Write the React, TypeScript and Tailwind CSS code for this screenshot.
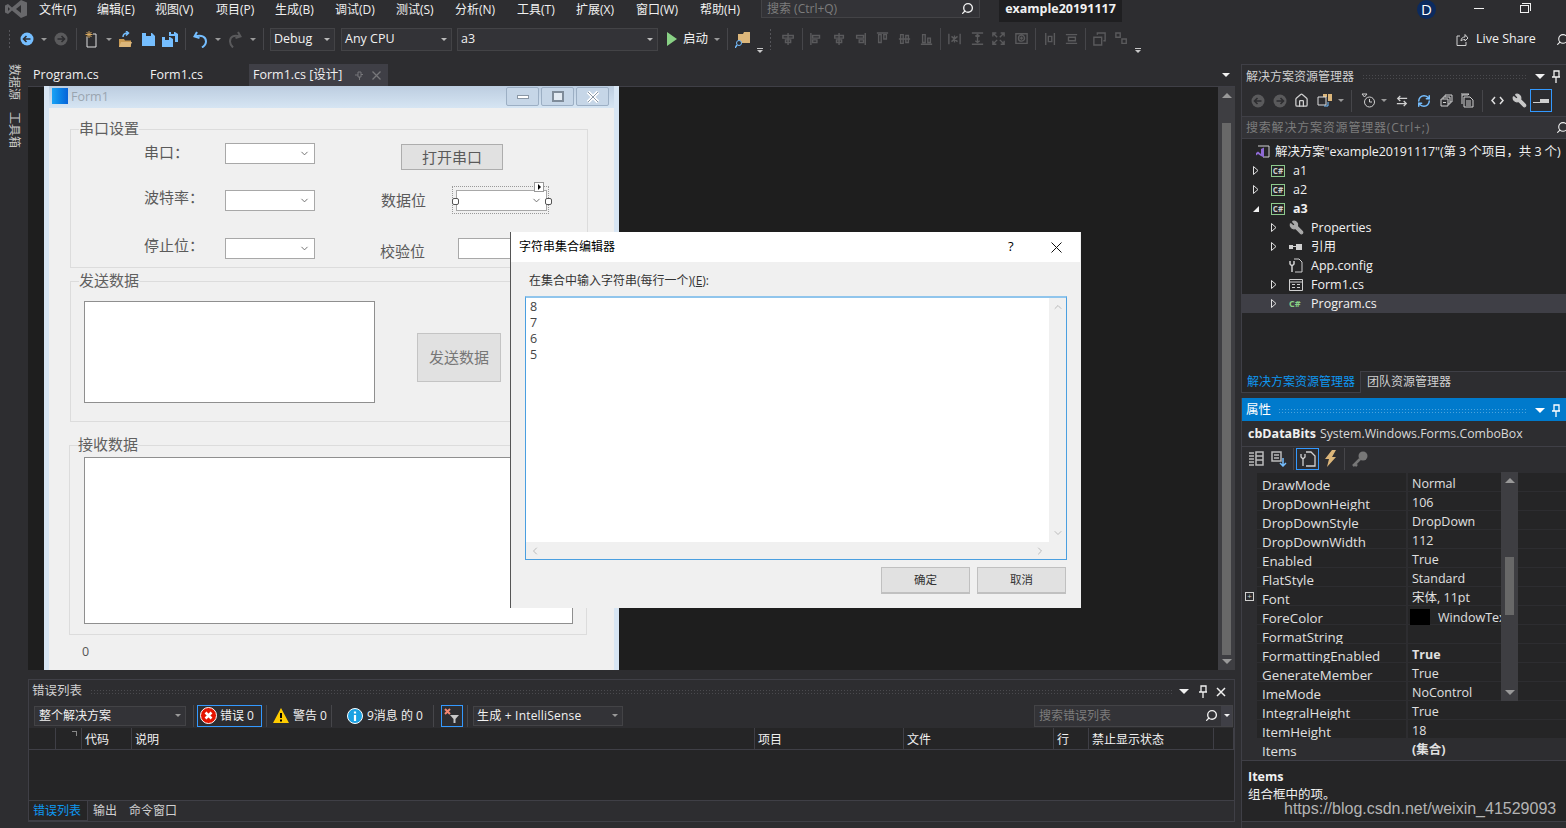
import type { ReactNode } from "react";
import { ChevronDown, ChevronUp, ChevronLeft, ChevronRight, Search, Wrench, Home, RefreshCw } from "lucide-react";

const font = "font-['Open_Sans','Noto_Sans_CJK_SC',sans-serif]";

const menus = [
  ["文件(F)", "w-[58px]"],
  ["编辑(E)", "w-[58px]"],
  ["视图(V)", "w-[61px]"],
  ["项目(P)", "w-[59px]"],
  ["生成(B)", "w-[60px]"],
  ["调试(D)", "w-[61px]"],
  ["测试(S)", "w-[59px]"],
  ["分析(N)", "w-[62px]"],
  ["工具(T)", "w-[59px]"],
  ["扩展(X)", "w-[60px]"],
  ["窗口(W)", "w-[64px]"],
  ["帮助(H)", "w-[61px]"],
];

const props: [string, ReactNode][] = [
  ["DrawMode", "Normal"],
  ["DropDownHeight", "106"],
  ["DropDownStyle", "DropDown"],
  ["DropDownWidth", "112"],
  ["Enabled", "True"],
  ["FlatStyle", "Standard"],
  ["Font", "宋体, 11pt"],
  ["ForeColor", <span className="flex items-center" key="fc"><span className="w-[20px] h-[16px] bg-black -ml-[2px] mr-[8px]" />WindowTex</span>],
  ["FormatString", ""],
  ["FormattingEnabled", <b key="fe">True</b>],
  ["GenerateMember", "True"],
  ["ImeMode", "NoControl"],
  ["IntegralHeight", "True"],
  ["ItemHeight", "18"],
  ["Items", <b key="it">(集合)</b>],
];

// disabled layout toolbar glyphs
const layoutIcons: [string, string][] = [
  ["ml-[10px]", "M7 1v14M1 4h12v3H1zM4 9h6v3H4z"],
  ["sep", ""],
  ["ml-[7px]", "M1 1v14M3 4h8v3H3zM3 9h5v3H3z"],
  ["ml-[10px]", "M7 1v14M2 4h10v3H2zM4 9h6v3H4z"],
  ["ml-[8px]", "M13 1v14M3 4h8v3H3zM6 9h5v3H6z"],
  ["ml-[9px]", "M1 1h13M3 3h3v9H3zM9 3h3v5H9z"],
  ["ml-[9px]", "M1 8h13M3 3h3v10H3zM9 4h3v8H9z"],
  ["ml-[9px]", "M1 14h13M3 3h3v9H3zM9 7h3v5H9z"],
  ["sep", ""],
  ["ml-[7px]", "M1 2v12M14 2v12M4 5l7 6M11 5l-7 6M7.5 4v8"],
  ["ml-[10px]", "M1 1h13M1 14h13M7.5 3v9M5 5l2.500-2 2.500 2M5 10l2.500 2 2.500-2"],
  ["ml-[8px]", "M1 5V1h4M10 1h4v4M14 10v4h-4M5 14H1v-4M2 2l4 4M13 2L9 6M13 13L9 9M2 13l4-4"],
  ["ml-[10px]", "M1 2h13v11H1zM4 7a3.500 3.500 0 1 0 7 0a3.500 3.500 0 1 0-7 0M7.500 5v4M5.500 7h4"],
  ["sep", ""],
  ["ml-[8px]", "M2 1v14M12 1v14M5 5h4v6H5z"],
  ["ml-[8px]", "M1 3h13M1 13h13M4 6h8v4H4z"],
  ["sep", ""],
  ["ml-[7px]", "M1 6h9v9H1zM5 3V1h9v9h-2"],
  ["ml-[9px]", "M1 1h5v5H1zM8 8h5v5H8z"],
];

function Sep({ className = "" }: { className?: string }) {
  return <span className={`w-px h-[22px] bg-[#46464a] ${className}`} />;
}

function Caret({ className = "" }: { className?: string }) {
  return <span className={`w-0 h-0 border-x-[3px] border-x-transparent border-t-[3px] border-t-[#999] ${className}`} />;
}

function WhiteCaret({ className = "" }: { className?: string }) {
  return <span className={`w-0 h-0 border-x-[5px] border-x-transparent border-t-[5px] border-t-[#f1f1f1] ${className}`} />;
}

function Overflow({ className = "" }: { className?: string }) {
  return (
    <span className={`flex flex-col items-center self-end mb-[3px] ${className}`}>
      <span className="w-[6px] h-px bg-[#c8c8c8] mb-px" />
      <span className="w-0 h-0 border-x-[3px] border-x-transparent border-t-[3px] border-t-[#c8c8c8]" />
    </span>
  );
}

function Grip({ className = "" }: { className?: string }) {
  return <span className={`h-[6px] bg-[radial-gradient(#4a4a4e_1px,transparent_1px)] bg-[length:3px_3px] ${className}`} />;
}

function Combo({ label, className }: { label: string; className: string }) {
  return (
    <div className={`h-[23px] bg-[#333337] border border-[#434346] flex items-center justify-between pl-[3px] pr-[4px] text-[12.5px] text-[#f1f1f1] ${className}`}>
      <span>{label}</span>
      <Caret className="border-t-[#bbb]" />
    </div>
  );
}

function CircleArrow({ dir, color, fg }: { dir: "l" | "r"; color: string; fg: string }) {
  return (
    <svg width="14" height="14" viewBox="0 0 14 14">
      <circle cx="7" cy="7" r="6.500" fill={color} />
      <path d={dir === "l" ? "M10.500 7H4M6.500 4L3.500 7l3 3" : "M3.500 7H10M7.500 4l3 3-3 3"} stroke={fg} strokeWidth="1.600" fill="none" />
    </svg>
  );
}

function MainToolbar() {
  return (
    <div className="h-[34px] flex items-center text-[#f1f1f1]">
      <span className="ml-[8px] w-[3px] h-[20px] bg-[radial-gradient(#55555a_1px,transparent_1px)] bg-[length:3px_4px]" />
      <span className="ml-[9px]"><CircleArrow dir="l" color="#75beff" fg="#2d2d30" /></span>
      <Caret className="ml-[7px]" />
      <span className="ml-[7px]"><CircleArrow dir="r" color="#5a5a5c" fg="#2d2d30" /></span>
      <Sep className="ml-[8px]" />
      <svg className="ml-[7px]" width="15" height="17" viewBox="0 0 15 17" fill="none">
        <path d="M3 6v10h9V6M9 3h3v3" stroke="#e0e0e0" />
        <path d="M5 0v7M1.500 3.500h7M2.500 1l5 5M7.500 1l-5 5" stroke="#d8a95f" />
      </svg>
      <Caret className="ml-[7px]" />
      <svg className="ml-[6px]" width="15" height="17" viewBox="0 0 15 17">
        <path d="M1 8h5l1 1.500h6V16H1z" fill="#c99a52" />
        <path d="M1 16l2-5h11l-2 5z" fill="#dcb67a" />
        <path d="M5 6c0-3 2-4 5-4M8 0l2.500 2L8 4.500" stroke="#75beff" strokeWidth="1.500" fill="none" />
      </svg>
      <svg className="ml-[9px]" width="13" height="13" viewBox="0 0 13 13">
        <path d="M0 0h10l3 3v10H0z" fill="#75beff" />
        <path d="M4 0h5v3H4z" fill="#2d2d30" />
      </svg>
      <svg className="ml-[7px]" width="16" height="15" viewBox="0 0 16 15">
        <path d="M7 0h6l3 2v8h-3V4H7z" fill="#75beff" />
        <path d="M0 5h8l3 2v8H0z" fill="#75beff" />
        <path d="M3 5h4v3H3zM9 0h3v2H9z" fill="#2d2d30" />
      </svg>
      <Sep className="ml-[7px]" />
      <svg className="ml-[7px]" width="15" height="17" viewBox="0 0 15 17" fill="none">
        <path d="M4 1L1.500 5.500 6.500 7M2 5.500c6-2 11 0 11 5 0 2-1 4-4 6" stroke="#75beff" strokeWidth="2" />
      </svg>
      <Caret className="ml-[7px]" />
      <svg className="ml-[8px]" width="13" height="17" viewBox="0 0 13 17" fill="none">
        <path d="M9 1l2.500 4.500L6.500 7M11 5.500c-6-2-10 0-10 5 0 2 1 4 3 6" stroke="#5a5a5c" strokeWidth="2" />
      </svg>
      <Caret className="ml-[8px] border-t-[#666]" />
      <Sep className="ml-[7px]" />
      <Combo label="Debug" className="ml-[6px] w-[65px]" />
      <Combo label="Any CPU" className="ml-[6px] w-[111px]" />
      <Combo label="a3" className="ml-[5px] w-[201px]" />
      <span className="ml-[9px] w-0 h-0 border-y-[7px] border-y-transparent border-l-[10px] border-l-[#89d185]" />
      <span className="ml-[6px] text-[12.5px]">启动</span>
      <Caret className="ml-[6px]" />
      <Sep className="ml-[7px]" />
      <svg className="ml-[7px]" width="16" height="17" viewBox="0 0 16 17">
        <path d="M3 3h5l1-2h6v11H3z" fill="#dcb67a" />
        <circle cx="4" cy="12" r="2.500" fill="#2d2d30" stroke="#75beff" />
        <path d="M2 14l-2 3" stroke="#75beff" strokeWidth="1.500" />
      </svg>
      <Overflow className="ml-[6px]" />
      <span className="ml-[6px] w-[3px] h-[22px] bg-[radial-gradient(#55555a_1px,transparent_1px)] bg-[length:3px_4px]" />
      {layoutIcons.map(([cls, d], i) =>
        cls === "sep" ? (
          <Sep key={i} className="ml-[7px]" />
        ) : (
          <svg key={i} className={cls} width="13" height="14" viewBox="0 0 15 16" fill="none" stroke="#5a5a5c" strokeWidth="1.600">
            <path d={d} />
          </svg>
        )
      )}
      <Overflow className="ml-[7px]" />
      <div className="flex-1" />
      <svg width="12" height="13" viewBox="0 0 12 13" fill="none" stroke="#d0d0d0">
        <path d="M1 3v9.500h9V9M1 3h3M5 8c0-3 2-4 4-4V1.500L12 5 9 8V6.500C7 6.500 6 7 5 8z" />
      </svg>
      <span className="ml-[8px] w-[80px] text-[12.5px]">Live Share</span>
      <Search size={13} className="text-[#f1f1f1] -scale-x-100 -mr-[3px]" />
    </div>
  );
}

function Combobox({ className }: { className: string }) {
  return (
    <div className={`absolute h-[21px] bg-white border border-[#a8a8a8] flex items-center justify-end pr-[4px] ${className}`}>
      <ChevronDown size={11} className="text-[#666]" />
    </div>
  );
}

function Legend({ text, className }: { text: string; className: string }) {
  return <span className={`absolute bg-[#f0f0f0] text-[15px] leading-[20px] text-[#606060] ${className}`}>{text}</span>;
}

function Label({ text, className }: { text: string; className: string }) {
  return <span className={`absolute text-[15px] leading-[20px] text-[#5a5a5a] ${className}`}>{text}</span>;
}

function FormDesigner() {
  return (
    <div className="ml-[16px] -mt-px w-[575px] h-[584px] relative bg-[#f0f0f0] border-x-[5px] border-x-[#d8e6f4] overflow-hidden">
      <div className="absolute -left-[5px] top-0 w-[575px] h-[22px] bg-gradient-to-b from-[#bccde0] to-[#d6e5f3]">
        <span className="absolute left-[8px] top-[2px] w-[16px] h-[16px] bg-gradient-to-r from-[#1aa3f5] to-[#0a63d8]" />
        <span className="absolute left-[27px] top-[2px] text-[12.5px] text-[#9aa5b0]">Form1</span>
        <div className="absolute left-[462px] top-[1px] flex gap-[2px]">
          {[
            <span key="a" className="w-[12px] h-[4px] bg-white border border-[#8a97a5]" />,
            <span key="b" className="w-[12px] h-[11px] bg-white/50 border-2 border-[#7f8c9a]" />,
            <svg key="c" width="14" height="12" viewBox="0 0 14 12"><path d="M2 1l10 10M12 1L2 11" stroke="#fff" strokeWidth="3.500" /><path d="M2 1l10 10M12 1L2 11" stroke="#8a97a5" strokeWidth="1" /></svg>,
          ].map((el, i) => (
            <span key={i} className="w-[33px] h-[19px] flex items-center justify-center rounded-[2px] border border-[#9cafc4] bg-[#c6d6e7]">{el}</span>
          ))}
        </div>
      </div>

      <div className="absolute left-[21px] top-[43px] w-[518px] h-[139px] border border-[#dcdcdc]" />
      <Legend text="串口设置" className="left-[30px] top-[32px]" />
      <Label text="串口：" className="left-[95px] top-[56px]" />
      <Label text="波特率：" className="left-[95px] top-[101px]" />
      <Label text="停止位：" className="left-[95px] top-[149px]" />
      <Combobox className="left-[176px] top-[57px] w-[90px]" />
      <Combobox className="left-[176px] top-[104px] w-[90px]" />
      <Combobox className="left-[176px] top-[152px] w-[90px]" />
      <div className="absolute left-[352px] top-[58px] w-[102px] h-[26px] bg-[#e1e1e1] border border-[#adadad] flex items-center justify-center text-[15px] text-[#5a5a5a]">打开串口</div>
      <Label text="数据位" className="left-[332px] top-[104px]" />
      <Label text="校验位" className="left-[331px] top-[155px]" />
      <div className="absolute left-[403px] top-[100px] w-[97px] h-[28px] border border-dotted border-[#999]" />
      <Combobox className="left-[407px] top-[104px] w-[91px]" />
      <span className="absolute left-[403px] top-[112px] w-[7px] h-[7px] bg-white border border-[#555] rounded-[2px]" />
      <span className="absolute left-[496px] top-[112px] w-[7px] h-[7px] bg-white border border-[#555] rounded-[2px]" />
      <span className="absolute left-[485px] top-[96px] w-[10px] h-[10px] bg-white border border-[#999] flex items-center justify-center">
        <span className="w-0 h-0 border-y-[3px] border-y-transparent border-l-[3px] border-l-black" />
      </span>
      <Combobox className="left-[409px] top-[152px] w-[90px]" />

      <div className="absolute left-[21px] top-[195px] w-[518px] h-[141px] border border-[#dcdcdc]" />
      <Legend text="发送数据" className="left-[30px] top-[184px]" />
      <div className="absolute left-[35px] top-[215px] w-[291px] h-[102px] bg-white border border-[#8f8f8f]" />
      <div className="absolute left-[368px] top-[247px] w-[84px] h-[49px] bg-[#e1e1e1] border border-[#c4c4c4] flex items-center justify-center text-[15px] text-[#777]">发送数据</div>

      <div className="absolute left-[20px] top-[359px] w-[518px] h-[190px] border border-[#dcdcdc]" />
      <Legend text="接收数据" className="left-[29px] top-[348px]" />
      <div className="absolute left-[35px] top-[371px] w-[489px] h-[167px] bg-white border border-[#8f8f8f]" />
      <span className="absolute left-[33px] top-[557px] text-[12.5px] text-[#555]">0</span>
    </div>
  );
}

function Dialog() {
  return (
    <div className="absolute left-[510px] top-[232px] w-[571px] h-[376px] bg-[#f0f0f0] border-l border-l-[#555] text-[#222] z-10">
      <div className="h-[30px] w-[569px] bg-white flex items-center pl-[8px] text-[12px] text-black">
        <span>字符串集合编辑器</span>
        <span className="ml-[393px] text-[13px]">?</span>
        <svg className="ml-[37px]" width="11" height="11" viewBox="0 0 11 11"><path d="M0.500 0.500l10 10M10.500 0.500l-10 10" stroke="#111" /></svg>
      </div>
      <div className="mt-[10px] ml-[18px] text-[12px] leading-[18px] text-[#333]">在集合中输入字符串(每行一个)(<span className="underline">E</span>):</div>
      <div className="mt-[6px] ml-[14px] w-[542px] h-[264px] border border-[#4a9fe0] border-t-2 border-t-[#90c5ec] bg-[#f0f0f0] flex flex-col">
        <div className="flex-1 flex min-h-0">
          <div className="flex-1 bg-white pl-[4px] pt-px text-[12.500px] leading-[16px] text-[#444]">
            <div>8</div>
            <div>7</div>
            <div>6</div>
            <div>5</div>
          </div>
          <div className="w-[17px] flex flex-col items-center justify-between py-[3px] text-[#bbb]">
            <ChevronUp size={12} />
            <ChevronDown size={12} />
          </div>
        </div>
        <div className="h-[17px] flex items-center justify-between pl-[3px] pr-[20px] text-[#bbb]">
          <ChevronLeft size={12} />
          <ChevronRight size={12} />
        </div>
      </div>
      <div className="mt-[7px] mr-[15px] flex justify-end gap-[7px]">
        {["确定", "取消"].map((t) => (
          <div key={t} className="w-[89px] h-[27px] bg-[#e1e1e1] border border-[#c0c0c0] border-b-2 flex items-center justify-center text-[11.500px] text-[#333]">{t}</div>
        ))}
      </div>
    </div>
  );
}

function Tri({ open }: { open?: boolean }) {
  return open ? (
    <span className="w-0 h-0 border-l-[6px] border-l-transparent border-b-[6px] border-b-[#f1f1f1]" />
  ) : (
    <svg width="6" height="9" viewBox="0 0 6 9"><path d="M0.500 0.500l4.500 4-4.500 4z" fill="none" stroke="#e0e0e0" /></svg>
  );
}

function CsBox() {
  return <span className="w-[14px] h-[12px] border border-[#8dc98d] flex items-center justify-center text-[8px] leading-none font-bold text-[#cfcfcf]">C#</span>;
}

function TreeRow({ indent, arrow, icon, label, selected, bold }: { indent: string; arrow?: "open" | "closed"; icon: ReactNode; label: string; selected?: boolean; bold?: boolean }) {
  return (
    <div className={`h-[19px] flex items-center ${selected ? "bg-[#3f3f46]" : ""}`}>
      <span className={`${indent} w-[18px] flex items-center`}>{arrow && <Tri open={arrow === "open"} />}</span>
      <span className="w-[20px] mr-[2px] flex items-center">{icon}</span>
      <span className={`pt-px text-[12.500px] text-[#f1f1f1] ${bold ? "font-bold" : ""}`}>{label}</span>
    </div>
  );
}

function SolutionExplorer() {
  return (
    <div className="h-[329px] border border-[#3f3f46] border-r-0 border-b-0 flex flex-col shrink-0">
      <div className="h-[22px] flex items-center pl-[4px] pt-px text-[12px] text-[#d0d0d0]">
        <span>解决方案资源管理器</span>
        <Grip className="w-[164px] ml-[8px]" />
        <WhiteCaret className="ml-[9px]" />
        <svg className="ml-[6px]" width="10" height="13" viewBox="0 0 10 13"><path d="M3 1h5v6H3zM1 7h8M5 7v6" stroke="#f1f1f1" strokeWidth="1.300" fill="none" /></svg>
      </div>
      <div className="h-[27px] flex items-center text-[#d0d0d0]">
        <span className="ml-[9px]"><CircleArrow dir="l" color="#5a5a5c" fg="#2d2d30" /></span>
        <span className="ml-[8px]"><CircleArrow dir="r" color="#5a5a5c" fg="#2d2d30" /></span>
        <Home size={15} className="ml-[7px]" />
        <svg className="ml-[8px]" width="15" height="15" viewBox="0 0 15 15">
          <path d="M6 1h4v3H6zM11 1h4v7h-4z" fill="#dcb67a" />
          <path d="M1 4h8v8H1z" fill="none" stroke="#e0e0e0" />
          <path d="M11 9v4H7" stroke="#75beff" fill="none" />
        </svg>
        <Caret className="ml-[6px]" />
        <Sep className="ml-[7px]" />
        <svg className="ml-[9px]" width="15" height="15" viewBox="0 0 15 15" fill="none" stroke="#d0d0d0">
          <circle cx="8.500" cy="9" r="5" /><path d="M8.500 6v3h2.500M1 1h5L3.500 4z" />
        </svg>
        <Caret className="ml-[5px]" />
        <svg className="ml-[9px]" width="12" height="14" viewBox="0 0 14 14" fill="none" stroke="#d0d0d0" strokeWidth="1.500">
          <path d="M13 4H2M5 1L2 4l3 3M1 10h11M9 7l3 3-3 3" />
        </svg>
        <RefreshCw size={14} strokeWidth={2.500} className="ml-[9px] text-[#75beff]" />
        <svg className="ml-[9px]" width="13" height="13" viewBox="0 0 13 13" fill="none" stroke="#d0d0d0">
          <path d="M1 5h7v7H1zM3 5V3h7v7H8M5 3V1h7v7h-2M3 8.500h3" />
        </svg>
        <svg className="ml-[7px]" width="14" height="15" viewBox="0 0 14 15" fill="none" stroke="#d0d0d0">
          <path d="M1 1h8l-1 1H2v9M4 4h6l3 3v7H4zM6 8h5M6 10h5M6 12h5" />
        </svg>
        <Sep className="ml-[8px]" />
        <svg className="ml-[8px]" width="13" height="9" viewBox="0 0 13 9" fill="none" stroke="#e0e0e0" strokeWidth="1.500"><path d="M4 1L1 4.500 4 8M9 1l3 3.500L9 8" /></svg>
        <Wrench size={15} fill="#c8c8c8" className="ml-[8px] text-[#c8c8c8] -scale-x-100" />
        <span className="ml-[3px] w-[22px] h-[23px] border border-[#3399ff] flex flex-col items-end justify-center px-[2px]">
          <span className="w-[9px] h-[3px] bg-[#d0d0d0]" />
          <span className="w-full h-px bg-[#d0d0d0]" />
        </span>
      </div>
      <div className="mt-[2px] h-[23px] bg-[#333337] border-y border-[#3f3f46] flex items-center justify-between pl-[4px] text-[12px] tracking-[0.8px] text-[#7c7c7c]">
        <span>搜索解决方案资源管理器(Ctrl+;)</span>
        <Search size={13} className="text-[#f1f1f1] -scale-x-100 -mr-[3px]" />
      </div>
      <div className="pt-[3px] flex-1 bg-[#252526]">
        <div className="h-[19px] flex items-center pl-[13px]">
          <svg width="15" height="14" viewBox="0 0 15 14" fill="none">
            <path d="M3 1h11v11H8" stroke="#d0d0d0" />
            <path d="M1 8l2-1.500L6 9V4l3-1.500v10L6 11 3 9l-2 1.500z" fill="#8e6ad3" />
          </svg>
          <span className="ml-[5px] pt-px text-[12.500px] text-[#f1f1f1] whitespace-nowrap tracking-[-0.1px]">解决方案"example20191117"(第 3 个项目，共 3 个)</span>
        </div>
        <TreeRow indent="ml-[11px]" arrow="closed" icon={<CsBox />} label="a1" />
        <TreeRow indent="ml-[11px]" arrow="closed" icon={<CsBox />} label="a2" />
        <TreeRow indent="ml-[11px]" arrow="open" icon={<CsBox />} label="a3" bold />
        <TreeRow indent="ml-[29px]" arrow="closed" icon={<Wrench size={15} fill="#aaa" className="text-[#aaa] -scale-x-100" />} label="Properties" />
        <TreeRow indent="ml-[29px]" arrow="closed" icon={<span className="flex items-center"><span className="w-[4px] h-[4px] bg-[#d0d0d0]" /><span className="w-[3px] h-px bg-[#d0d0d0]" /><span className="w-[6px] h-[6px] bg-[#d0d0d0]" /></span>} label="引用" />
        <TreeRow indent="ml-[29px]" icon={<svg width="14" height="15" viewBox="0 0 14 15" fill="none" stroke="#d0d0d0"><path d="M5 1h5l3 3v10H6" /><path d="M1 3v3l2 2 2-2V3M3 8v6" strokeWidth="1.500" /></svg>} label="App.config" />
        <TreeRow indent="ml-[29px]" arrow="closed" icon={<svg width="14" height="12" viewBox="0 0 14 12" fill="none" stroke="#d0d0d0"><path d="M0.500 0.500h13v11H0.500zM1 3h12M3 5.500h3M8 5.500h3M3 8.500h3M8 8.500h3" /></svg>} label="Form1.cs" />
        <TreeRow indent="ml-[29px]" arrow="closed" selected icon={<span className="text-[9px] leading-none font-bold text-[#89d185]">C#</span>} label="Program.cs" />
      </div>
      <div className="h-[22px] shrink-0 flex text-[12px]">
        <span className="w-[119px] bg-[#252526] border-r border-b border-[#3f3f46] pl-[5px] leading-[21px] text-[#0e97f0]">解决方案资源管理器</span>
        <span className="flex-1 border-t border-[#3f3f46] pl-[6px] leading-[20px] text-[#d0d0d0]">团队资源管理器</span>
      </div>
    </div>
  );
}

function PropertiesPanel() {
  return (
    <div className="mt-[5px] flex-1 min-h-0 flex flex-col border-l border-[#3f3f46] relative">
      <div className="h-[23px] bg-[#007acc] flex items-center pl-[4px] pt-[2px] text-[12.500px] text-white">
        <span className="w-[32px]">属性</span>
        <span className="w-[248px] h-[6px] bg-[radial-gradient(#4aa3dd_1px,transparent_1px)] bg-[length:3px_3px]" />
        <WhiteCaret className="ml-[9px] border-t-white" />
        <svg className="ml-[6px]" width="10" height="13" viewBox="0 0 10 13"><path d="M3 1h5v6H3zM1 7h8M5 7v6" stroke="#fff" strokeWidth="1.300" fill="none" /></svg>
      </div>
      <div className="h-[25px] flex items-center pl-[6px] pt-[2px] text-[12.500px] text-[#f1f1f1]">
        <b>cbDataBits</b>
        <span className="ml-[4px] text-[12.300px] text-[#d8d8d8]">System.Windows.Forms.ComboBox</span>
      </div>
      <div className="h-[24px] border-t border-[#3f3f46] flex items-center pl-[6px]">
        <svg width="16" height="15" viewBox="0 0 16 15" fill="none" stroke="#bbb" strokeWidth="1.500"><path d="M1 2h5M1 5h5M1 8h5M1 11h5M1 14h5M8 1h7v13H8zM8 5h7M8 9h7" /></svg>
        <svg className="ml-[7px]" width="16" height="16" viewBox="0 0 16 16" fill="none"><path d="M1 1h9v9H1zM3 4h5M3 7h5" stroke="#bbb" strokeWidth="1.500" /><path d="M12 7v8M9 12l3 3 3-3" stroke="#75beff" strokeWidth="1.500" /></svg>
        <Sep className="ml-[6px]" />
        <span className="ml-[2px] w-[23px] h-[22px] border border-[#3399ff] flex items-center justify-center">
          <svg width="16" height="16" viewBox="0 0 16 16" fill="none" stroke="#d0d0d0" strokeWidth="1.300"><path d="M6 1h5l4 4v10H6M1 3v3l2 2 2-2V3M3 8v7" /></svg>
        </span>
        <svg className="ml-[5px]" width="14" height="17" viewBox="0 0 14 17"><path d="M8 0L1 9h4l-2 8 9-10H8l4-7z" fill="#dcb67a" /></svg>
        <Sep className="ml-[6px]" />
        <svg className="ml-[7px]" width="16" height="16" viewBox="0 0 16 16"><circle cx="11" cy="5" r="4.500" fill="#777" /><path d="M8 8l-7 7M3 13l2 2" stroke="#777" strokeWidth="2.500" /></svg>
      </div>
      <div className="flex-1 min-h-0 pt-[3px] relative">
        {props.map(([name, value]) => (
          <div key={name} className="h-[19px] flex border-b border-[#2d2d30]">
            <span className="w-[15px] shrink-0 flex items-center justify-center">
              {name === "Font" && (
                <span className="w-[9px] h-[9px] border border-[#d0d0d0] flex items-center justify-center text-[8px] leading-none text-[#d0d0d0]">+</span>
              )}
            </span>
            <span className={`w-[151px] shrink-0 pl-[5px] pt-[5px] text-[13.300px] leading-[15px] text-[#e0e0e0] border-r-2 border-[#2d2d30] ${name === "Items" ? "" : "bg-[#252526]"}`}>{name}</span>
            <span className={`flex-1 pl-[4px] pt-[3px] text-[12.500px] leading-[15px] text-[#e0e0e0] ${name === "Items" ? "" : "bg-[#252526]"}`}>{value}</span>
          </div>
        ))}
        <div className="absolute left-[259px] top-[2px] w-[17px] h-[229px] bg-[#3e3e42] flex flex-col items-center justify-between py-[6px]">
          <span className="w-0 h-0 border-x-[5px] border-x-transparent border-b-[5px] border-b-[#999]" />
          <span className="absolute top-[85px] left-[4px] w-[9px] h-[58px] bg-[#686868]" />
          <span className="w-0 h-0 border-x-[5px] border-x-transparent border-t-[5px] border-t-[#999]" />
        </div>
      </div>
      <div className="h-[62px] bg-[#252526] border-y border-[#3f3f46] pl-[6px] pt-[7px] text-[12.500px] leading-[18px] text-[#f1f1f1] shrink-0">
        <b className="block">Items</b>
        <span>组合框中的项。</span>
      </div>
      <div className="h-[6px] shrink-0" />
    </div>
  );
}

function ErrorList() {
  const cols: [string, string][] = [
    ["w-[27px]", ""],
    ["w-[26px]", "corner"],
    ["w-[50px]", "代码"],
    ["w-[623px]", "说明"],
    ["w-[149px]", "项目"],
    ["w-[150px]", "文件"],
    ["w-[35px]", "行"],
    ["w-[125px]", "禁止显示状态"],
    ["flex-1", ""],
  ];
  return (
    <div className="h-[143px] border border-[#3f3f46] mt-[9px] flex flex-col text-[12px] text-[#f1f1f1]">
      <div className="h-[23px] shrink-0 flex items-center pl-[3px] text-[#d0d0d0] text-[12.5px]">
        <span className="w-[58px]">错误列表</span>
        <Grip className="w-[1082px]" />
        <WhiteCaret className="ml-[7px]" />
        <svg className="ml-[9px]" width="10" height="13" viewBox="0 0 10 13"><path d="M3 1h5v6H3zM1 7h8M5 7v6" stroke="#f1f1f1" strokeWidth="1.300" fill="none" /></svg>
        <svg className="ml-[8px]" width="10" height="10" viewBox="0 0 10 10"><path d="M1 1l8 8M9 1L1 9" stroke="#f1f1f1" strokeWidth="1.500" /></svg>
      </div>
      <div className="h-[25px] shrink-0 flex items-center">
        <div className="ml-[5px] w-[152px] h-[20px] bg-[#333337] border border-[#434346] flex items-center justify-between px-[4px]">
          <span>整个解决方案</span>
          <Caret />
        </div>
        <Sep className="ml-[7px]" />
        <div className="ml-[3px] w-[65px] h-[22px] border border-[#3399ff] flex items-center pl-[2px]">
          <svg width="17" height="17" viewBox="0 0 17 17"><circle cx="8.500" cy="8.500" r="8" fill="#e51400" stroke="#fff" /><path d="M5.500 5.500l6 6M11.500 5.500l-6 6" stroke="#fff" strokeWidth="2.500" /></svg>
          <span className="ml-[3px]">错误 0</span>
        </div>
        <Sep className="ml-[4px]" />
        <svg className="ml-[6px]" width="16" height="17" viewBox="0 0 16 17"><path d="M8 1l8 15H0z" fill="#ffcc00" /><path d="M8 6v5M8 12.500v2" stroke="#000" strokeWidth="2" /></svg>
        <span className="ml-[4px] w-[35px]">警告 0</span>
        <Sep className="ml-[3px]" />
        <svg className="ml-[15px]" width="16" height="16" viewBox="0 0 16 16"><circle cx="8" cy="8" r="7.500" fill="#1ba1e2" stroke="#fff" /><path d="M8 3.500v2M8 7v6" stroke="#fff" strokeWidth="2.200" /></svg>
        <span className="ml-[4px] w-[59px] whitespace-nowrap">9消息 的 0</span>
        <Sep className="ml-[7px]" />
        <div className="ml-[7px] w-[22px] h-[22px] border border-[#3399ff] flex items-center justify-center">
          <svg width="16" height="16" viewBox="0 0 16 16"><path d="M1 1l5 5M6 1L1 6" stroke="#f48771" strokeWidth="2" /><path d="M6 7h9l-3.500 4v4h-2v-4z" fill="#c8c8c8" /></svg>
        </div>
        <Sep className="ml-[4px]" />
        <div className="ml-[5px] w-[150px] h-[20px] bg-[#333337] border border-[#434346] flex items-center justify-between pl-[3px] pr-[4px]">
          <span className="tracking-[0.2px]">生成 + IntelliSense</span>
          <Caret />
        </div>
        <div className="ml-[411px] w-[199px] h-[22px] bg-[#333337] border border-[#434346] flex items-center justify-between pl-[4px] text-[#7c7c7c]">
          <span>搜索错误列表</span>
          <span className="flex items-center h-full">
            <Search size={13} strokeWidth={2.500} className="text-[#f1f1f1] -scale-x-100 mr-[3px]" />
            <span className="w-[11px] h-full bg-[#3f3f46] flex items-center justify-center"><Caret className="border-t-[#f1f1f1]" /></span>
          </span>
        </div>
      </div>
      <div className="h-[22px] shrink-0 bg-[#252526] border-b border-[#3f3f46] flex">
        {cols.map(([w, label], i) => (
          <div key={i} className={`${w} shrink-0 border-r border-[#3f3f46] pl-[3px] pt-[2px] flex items-center text-[12px] relative`}>
            {label === "corner" ? <span className="absolute right-[4px] top-[3px] w-[5px] h-[5px] border-t border-r border-[#888]" /> : label}
          </div>
        ))}
      </div>
      <div className="h-[51px] shrink-0 bg-[#252526] border-b border-[#3f3f46]" />
      <div className="h-[20px] shrink-0 flex items-start text-[#d0d0d0]">
        <span className="w-[59px] h-[20px] bg-[#252526] border-r border-b border-[#3f3f46] text-[#0e97f0] pl-[4px] leading-[20px]">错误列表</span>
        <span className="ml-[5px] leading-[20px]">输出</span>
        <span className="ml-[12px] leading-[20px]">命令窗口</span>
      </div>
    </div>
  );
}

export default function App() {
  return (
    <div className={`relative w-[1566px] h-[828px] overflow-hidden bg-[#2d2d30] flex flex-col ${font}`}>
      <div className="h-[22px] flex items-start shrink-0 text-[12px] text-[#f1f1f1]">
        <svg className="ml-[5px]" width="22" height="18" viewBox="0 0 22 18" fill="#68686b">
          <path d="M16 0l6 2.500v13L16 18l-9-7.500L3 14l-3-1.500v-7L3 4l4 3.500zM16 5l-5 4 5 4zM3 7v4l2-2z" />
        </svg>
        <div className="ml-[12px] flex pt-px">
          {menus.map(([m, w]) => (
            <span key={m} className={`${w} shrink-0 text-[12px]`}>{m}</span>
          ))}
        </div>
        <div className="w-[219px] h-[18px] bg-[#333337] border border-[#434346] border-t-0 flex items-center justify-between px-[5px] text-[12px] text-[#7c7c7c]">
          <span>搜索 (Ctrl+Q)</span>
          <Search size={13} strokeWidth={2.500} className="text-[#f1f1f1] -scale-x-100" />
        </div>
        <div className="ml-[19px] w-[123px] h-[22px] bg-[#1f1f21] flex items-center justify-center pb-[4px] font-bold text-[12.5px]">example20191117</div>
        <span className="ml-[295px] w-[19px] h-[19px] rounded-full bg-[#0b2a5e] flex items-center justify-center text-[15px] leading-[19px] text-white">D</span>
        <span className="ml-[38px] mt-[8px] w-[10px] h-px bg-[#f1f1f1]" />
        <span className="relative ml-[36px] mt-[5px] w-[9px] h-[8px] border border-[#f1f1f1]">
          <span className="absolute -right-[3px] -top-[3px] w-[9px] h-[8px] border-t border-r border-[#f1f1f1]" />
        </span>
      </div>
      <MainToolbar />

      <div className="flex flex-1 min-h-0 mt-[8px]">
        <div className="w-[28px] shrink-0 flex flex-col items-center text-[12px] text-[#c8c8c8]">
          <span className="h-[37px] flex items-center justify-center [writing-mode:vertical-rl] [text-orientation:sideways]">数据源</span>
          <span className="h-[37px] mt-[11px] flex items-center justify-center [writing-mode:vertical-rl] [text-orientation:sideways]">工具箱</span>
        </div>

        <div className="w-[1207px] shrink-0 flex flex-col">
          <div className="h-[22px] flex items-stretch text-[12.5px] text-[#f1f1f1] shrink-0">
            <span className="w-[122px] pl-[5px] leading-[21px]">Program.cs</span>
            <span className="w-[99px] leading-[21px]">Form1.cs</span>
            <span className="w-[139px] bg-[#3f3f46] pl-[4px] flex items-center">
              <span>Form1.cs [设计]</span>
              <svg className="ml-[12px]" width="10" height="9" viewBox="0 0 10 9"><path d="M4 1h3v5H4zM1 4h3M7 3.500h2M5.500 6v3" stroke="#77777a" fill="none" /></svg>
              <svg className="ml-[8px]" width="9" height="9" viewBox="0 0 9 9"><path d="M0.500 0.500l8 8M8.500 0.500l-8 8" stroke="#77777a" strokeWidth="1.300" /></svg>
            </span>
            <span className="flex-1 flex items-center justify-end pr-[5px]"><span className="w-0 h-0 border-x-[4px] border-x-transparent border-t-[4px] border-t-[#f1f1f1]" /></span>
          </div>
          <div className="h-[584px] shrink-0 bg-[#1e1e1e] border-t border-[#3f3f46] flex relative">
            <FormDesigner />
            <div className="ml-auto w-[17px] bg-[#3e3e42] flex flex-col items-center justify-between py-[6px] relative">
              <span className="w-0 h-0 border-x-[5px] border-x-transparent border-b-[5px] border-b-[#999]" />
              <span className="absolute top-[36px] left-[4px] w-[9px] h-[532px] bg-[#686868]" />
              <span className="w-0 h-0 border-x-[5px] border-x-transparent border-t-[5px] border-t-[#999]" />
            </div>
          </div>
          <ErrorList />
        </div>

        <div className="ml-[6px] flex-1 flex flex-col min-w-0 whitespace-nowrap overflow-hidden">
          <SolutionExplorer />
          <PropertiesPanel />
        </div>
      </div>

      <Dialog />
      <span className="absolute left-[1284px] top-[799px] text-[16px] leading-[20px] text-[#b4b4b4] font-['Liberation_Sans',sans-serif] z-10">https://blog.csdn.net/weixin_41529093</span>
    </div>
  );
}
